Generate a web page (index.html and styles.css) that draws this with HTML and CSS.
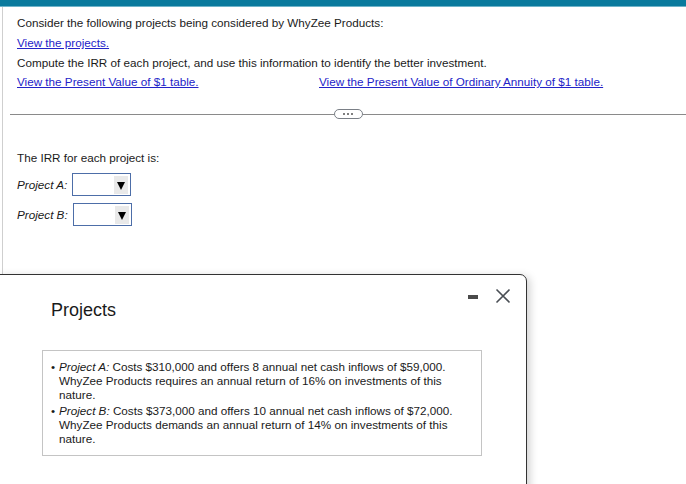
FILE: index.html
```html
<!DOCTYPE html>
<html>
<head>
<meta charset="utf-8">
<link rel="stylesheet" href="styles.css">
</head>
<body>
<div class="topbar"></div>
<div class="main">
  <div class="intro">
    <p class="line">Consider the following projects being considered by WhyZee Products:</p>
    <p class="line"><a href="#">View the projects.</a></p>
    <p class="line">Compute the IRR of each project, and use this information to identify the better investment.</p>
    <p class="line links"><span><a href="#">View the Present Value of $1 table.</a></span><span><a href="#">View the Present Value of Ordinary Annuity of $1 table.</a></span></p>
  </div>
  <div class="sep">
    <div class="rule"></div>
    <div class="more"><span></span><span></span><span></span></div>
    <div class="rule"></div>
  </div>
  <p class="line irr">The IRR for each project is:</p>
  <div class="row"><span class="lbl">Project A:</span><span class="sel"><span class="arrow"></span></span></div>
  <div class="row"><span class="lbl">Project B:</span><span class="sel"><span class="arrow"></span></span></div>
</div>
<div class="modal">
  <div class="mhead">
    <h2 class="mtitle">Projects</h2>
    <div class="mtools">
      <span class="minus"></span>
      <svg class="close" width="16" height="16" viewBox="0 0 16 16"><path d="M1.5 1.5 L14.5 14.5 M14.5 1.5 L1.5 14.5" stroke="#4a4f55" stroke-width="1.6" fill="none"/></svg>
    </div>
  </div>
  <div class="mbox">
    <ul>
      <li><span class="nm">Project A:</span> Costs $310,000 and offers 8 annual net cash inflows of $59,000. WhyZee Products requires an annual return of 16% on investments of this nature.</li>
      <li><span class="nm">Project B:</span> Costs $373,000 and offers 10 annual net cash inflows of $72,000. WhyZee Products demands an annual return of 14% on investments of this nature.</li>
    </ul>
  </div>
</div>
</body>
</html>
```
FILE: styles.css
```css
html, body {
  margin: 0;
  padding: 0;
  background: #fff;
  font-family: "Liberation Sans", Arial, sans-serif;
  font-size: 11.7px;
  color: #1a1a1a;
  overflow: hidden;
}
.topbar {
  height: 6px;
  background: #0a7a9d;
  border-bottom: 1px solid #6fb3c9;
}
.main {
  margin-left: 2px;
  border-left: 1px solid #cfcfcf;
  padding: 6px 0 0 14px;
  height: 300px;
}
.line {
  margin: 0;
  line-height: 19px;
}
.intro .line:nth-child(2) { line-height: 21px; }
a {
  color: #2323c8;
  text-decoration: underline;
}
.links {
  display: grid;
  grid-template-columns: 302px auto;
}
.sep {
  display: flex;
  align-items: center;
  margin: 18px 0 0 -7px;
  height: 10px;
}
.rule {
  flex: 1;
  height: 1px;
  background: #8a8a8a;
}
.more {
  width: 27px;
  height: 8px;
  border: 1px solid #7a7f86;
  border-radius: 5px;
  display: flex;
  justify-content: center;
  align-items: center;
  gap: 2px;
}
.more span {
  width: 2px;
  height: 2px;
  background: #555;
  border-radius: 1px;
}
.irr { margin-top: 29px; }
.row {
  display: flex;
  align-items: center;
  gap: 5px;
  margin-top: 7px;
}
.irr + .row { margin-top: 6px; }
.lbl {
  font-style: italic;
  white-space: nowrap;
}
.sel {
  width: 55px;
  height: 21px;
  border: 1px solid #4d6ea8;
  display: flex;
  justify-content: flex-end;
  align-items: center;
  padding-right: 2px;
}
.arrow {
  width: 14px;
  height: 18px;
  background: #e9e9e9;
  position: relative;
}
.arrow::after {
  content: "";
  position: absolute;
  left: 3px;
  top: 6px;
  border-left: 4px solid transparent;
  border-right: 4px solid transparent;
  border-top: 8px solid #000;
}
.modal {
  position: absolute;
  left: -2px;
  top: 274px;
  width: 527px;
  height: 260px;
  background: #fff;
  border: 1px solid #333;
  border-radius: 0 7px 0 0;
  box-shadow: 3px 2px 8px rgba(0,0,0,0.18);
}
.mhead {
  display: flex;
  justify-content: space-between;
  align-items: flex-start;
  padding: 0 15px 0 52px;
}
.mtitle {
  margin: 24px 0 0 0;
  font-size: 18px;
  font-weight: normal;
  color: #1a1a1a;
  line-height: 22px;
}
.mtools {
  display: flex;
  align-items: center;
  gap: 17px;
  margin-top: 13px;
}
.minus {
  width: 10px;
  height: 4px;
  background: #4a4a4a;
  margin-top: 2px;
}
.close { display: block; }
.mbox {
  margin: 29px 0 0 43px;
  width: 438px;
  border: 1px solid #c4c4c4;
  padding: 9px 0 9px 0;
}
.mbox ul {
  margin: 0;
  padding: 0 12px 0 16px;
  list-style: none;
}
.mbox li {
  line-height: 14px;
  margin-bottom: 2px;
  position: relative;
}
.mbox li:last-child { margin-bottom: 0; }
.mbox li::before {
  content: "•";
  position: absolute;
  left: -8px;
  top: 0;
}
.nm {
  font-style: italic;
}
```
